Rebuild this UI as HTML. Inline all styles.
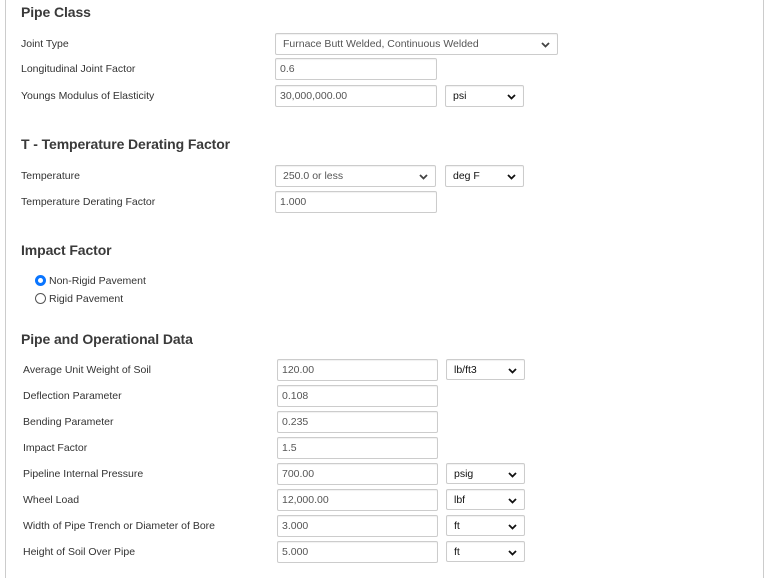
<!DOCTYPE html>
<html><head><meta charset="utf-8"><style>
body{margin:0;width:768px;height:569px;background:#fff;font-family:"Liberation Sans",sans-serif;position:relative;overflow:hidden;color:#333}
.frame{position:absolute;left:5px;top:-2px;width:757px;height:580px;border-left:1px solid #ccc;border-right:1px solid #ccc}
.h{position:absolute;left:21px;font-size:14px;font-weight:bold;color:#3a3a3a;letter-spacing:-0.1px}
.l{position:absolute;font-size:10.5px;color:#333;line-height:12px}
.b{position:absolute;box-sizing:border-box;border:1px solid #ccc;border-radius:2px;height:22px;font-size:10.5px;line-height:20px;color:#555;padding-left:4px;background:#fff;box-shadow:inset 0 1px 1px rgba(0,0,0,.06)}
.s{padding-left:7px;color:#111}
.s.g{color:#555}
.s svg{position:absolute;right:7px;top:8px}
.r{position:absolute;left:35px;font-size:10.5px;color:#333}
.rc{position:absolute;left:35px;width:11px;height:11px;box-sizing:border-box;border-radius:50%}
</style></head><body>
<div class="frame"></div>
<div class="h" style="top:4px">Pipe Class</div>
<div class="l" style="left:21px;top:38px">Joint Type</div>
<div class="b s g" style="left:275px;top:33px;width:283px">Furnace Butt Welded, Continuous Welded<svg width="9" height="6" viewBox="0 0 9 6"><path d="M1 1L4.5 4.5L8 1" stroke="#444" stroke-width="1.8" fill="none"/></svg></div>
<div class="l" style="left:21px;top:63px">Longitudinal Joint Factor</div>
<div class="b" style="left:275px;top:58px;width:162px">0.6</div>
<div class="l" style="left:21px;top:90px">Youngs Modulus of Elasticity</div>
<div class="b" style="left:275px;top:85px;width:162px">30,000,000.00</div>
<div class="b s" style="left:445px;top:85px;width:79px">psi<svg width="9" height="6" viewBox="0 0 9 6"><path d="M1 1L4.5 4.5L8 1" stroke="#111" stroke-width="1.8" fill="none"/></svg></div>

<div class="h" style="top:136px">T - Temperature Derating Factor</div>
<div class="l" style="left:21px;top:170px">Temperature</div>
<div class="b s g" style="left:275px;top:165px;width:161px">250.0 or less<svg width="9" height="6" viewBox="0 0 9 6"><path d="M1 1L4.5 4.5L8 1" stroke="#444" stroke-width="1.8" fill="none"/></svg></div>
<div class="b s" style="left:445px;top:165px;width:79px">deg F<svg width="9" height="6" viewBox="0 0 9 6"><path d="M1 1L4.5 4.5L8 1" stroke="#111" stroke-width="1.8" fill="none"/></svg></div>
<div class="l" style="left:21px;top:196px">Temperature Derating Factor</div>
<div class="b" style="left:275px;top:191px;width:162px">1.000</div>

<div class="h" style="top:242px">Impact Factor</div>
<div class="rc" style="top:275px;border:3px solid #0a75ff;background:#fff"></div>
<div class="r" style="left:49px;top:275px">Non-Rigid Pavement</div>
<div class="rc" style="top:293px;border:1px solid #555"></div>
<div class="r" style="left:49px;top:293px">Rigid Pavement</div>

<div class="h" style="top:331px">Pipe and Operational Data</div>
<div class="l" style="left:23px;top:364px">Average Unit Weight of Soil</div>
<div class="b" style="left:277px;top:359px;width:161px">120.00</div>
<div class="b s" style="left:446px;top:359px;width:79px;height:21px">lb/ft3<svg width="9" height="6" viewBox="0 0 9 6"><path d="M1 1L4.5 4.5L8 1" stroke="#111" stroke-width="1.8" fill="none"/></svg></div>
<div class="l" style="left:23px;top:390px">Deflection Parameter</div>
<div class="b" style="left:277px;top:385px;width:161px">0.108</div>
<div class="l" style="left:23px;top:416px">Bending Parameter</div>
<div class="b" style="left:277px;top:411px;width:161px">0.235</div>
<div class="l" style="left:23px;top:442px">Impact Factor</div>
<div class="b" style="left:277px;top:437px;width:161px">1.5</div>
<div class="l" style="left:23px;top:468px">Pipeline Internal Pressure</div>
<div class="b" style="left:277px;top:463px;width:161px">700.00</div>
<div class="b s" style="left:446px;top:463px;width:79px;height:21px">psig<svg width="9" height="6" viewBox="0 0 9 6"><path d="M1 1L4.5 4.5L8 1" stroke="#111" stroke-width="1.8" fill="none"/></svg></div>
<div class="l" style="left:23px;top:494px">Wheel Load</div>
<div class="b" style="left:277px;top:489px;width:161px">12,000.00</div>
<div class="b s" style="left:446px;top:489px;width:79px;height:21px">lbf<svg width="9" height="6" viewBox="0 0 9 6"><path d="M1 1L4.5 4.5L8 1" stroke="#111" stroke-width="1.8" fill="none"/></svg></div>
<div class="l" style="left:23px;top:520px">Width of Pipe Trench or Diameter of Bore</div>
<div class="b" style="left:277px;top:515px;width:161px">3.000</div>
<div class="b s" style="left:446px;top:515px;width:79px;height:21px">ft<svg width="9" height="6" viewBox="0 0 9 6"><path d="M1 1L4.5 4.5L8 1" stroke="#111" stroke-width="1.8" fill="none"/></svg></div>
<div class="l" style="left:23px;top:546px">Height of Soil Over Pipe</div>
<div class="b" style="left:277px;top:541px;width:161px">5.000</div>
<div class="b s" style="left:446px;top:541px;width:79px;height:21px">ft<svg width="9" height="6" viewBox="0 0 9 6"><path d="M1 1L4.5 4.5L8 1" stroke="#111" stroke-width="1.8" fill="none"/></svg></div>
</body></html>
